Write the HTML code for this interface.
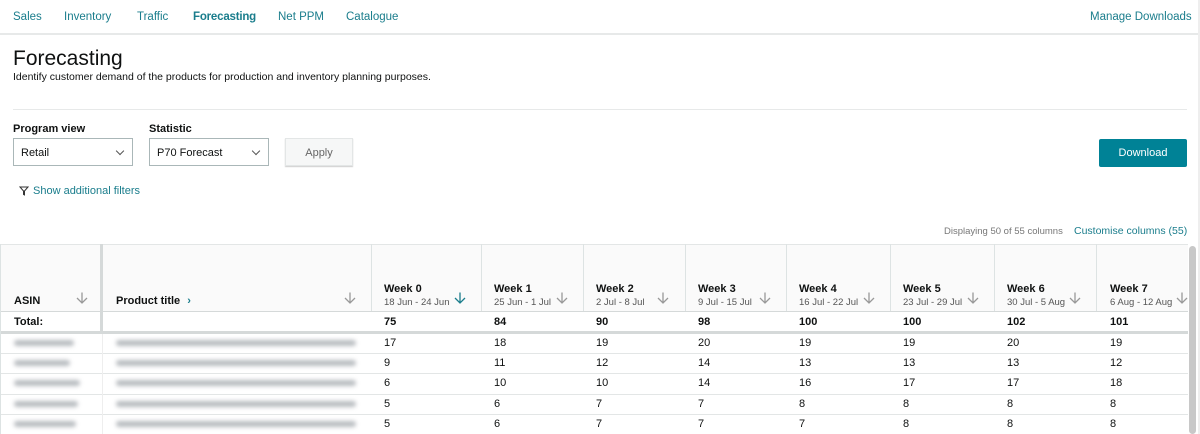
<!DOCTYPE html>
<html><head><meta charset="utf-8"><style>
*{box-sizing:border-box;margin:0;padding:0}
body{width:1200px;height:434px;overflow:hidden;background:#fff;font-family:"Liberation Sans",Arial,sans-serif;color:#0f1111;position:relative}
.a{position:absolute;white-space:nowrap}
.nav{font-size:11.5px;color:#1a7d8c;top:11px}
.lbl{font-size:11px;font-weight:bold}
.sel{position:absolute;height:28px;border:1px solid #aab7b8;background:#fff;font-size:11px;padding:8px 7px}
.chev{position:absolute;right:9px;top:9px;width:6px;height:6px;border-right:1px solid #555;border-bottom:1px solid #555;transform:rotate(45deg)}
.hd{font-size:11px;font-weight:bold}
.sub{font-size:9.5px;color:#555;font-weight:normal}
.vl{position:absolute;width:1px;background:#dde3e3}
.hl{position:absolute;height:1px;background:#e3e6e6;left:0;width:1188px}
.c{position:absolute;font-size:11px}
.blur{position:absolute;height:6px;background:#b8bcc0;filter:blur(2px);border-radius:3px}
</style></head><body>
<div class="a nav" style="left:13px">Sales</div>
<div class="a nav" style="left:64px">Inventory</div>
<div class="a nav" style="left:137px">Traffic</div>
<div class="a nav" style="left:193px;font-weight:bold;letter-spacing:-0.2px">Forecasting</div>
<div class="a nav" style="left:278px">Net PPM</div>
<div class="a nav" style="left:346px">Catalogue</div>
<div class="a nav" style="left:1090px">Manage Downloads</div>
<div class="a" style="left:0;top:33px;width:1200px;height:2px;background:#e7e9e9"></div>
<div class="a" style="left:1198px;top:0;width:2px;height:434px;background:#eee"></div>
<div class="a" style="left:13px;top:47px;font-size:21px">Forecasting</div>
<div class="a" style="left:13px;top:71px;font-size:10.5px">Identify customer demand of the products for production and inventory planning purposes.</div>
<div class="a" style="left:13px;top:109px;width:1174px;height:1px;background:#e7e9e9"></div>
<div class="a lbl" style="left:13px;top:123px">Program view</div>
<div class="a lbl" style="left:149px;top:123px">Statistic</div>
<div class="sel" style="left:13px;top:138px;width:120px">Retail<span class="chev"></span></div>
<div class="sel" style="left:149px;top:138px;width:120px">P70 Forecast<span class="chev"></span></div>
<div class="a" style="left:285px;top:138px;width:68px;height:28px;background:#f6f7f7;border:1px solid #e3e6e6;box-shadow:0 1px 1px #ccc;font-size:11px;color:#666;text-align:center;line-height:28px">Apply</div>
<div class="a" style="left:1099px;top:139px;width:88px;height:28px;background:#008296;color:#fff;font-size:11px;text-align:center;line-height:28px;border-radius:2px">Download</div>
<svg class="a" style="left:19px;top:186px" width="10" height="10"><path d="M1 1h8L5.5 5v4L4.5 8.5V5z" fill="none" stroke="#333" stroke-width="1"/></svg>
<div class="a" style="left:33px;top:185px;font-size:11px;color:#1a7d8c">Show additional filters</div>
<div class="a" style="left:944px;top:226px;font-size:9.5px;color:#777">Displaying 50 of 55 columns</div>
<div class="a" style="left:1074px;top:225px;font-size:10.5px;color:#1a7d8c">Customise columns (55)</div>
<div class="a" style="left:0;top:244px;width:1188px;height:67px;background:#fafafa;border-top:1px solid #e3e6e6"></div>
<div class="a" style="left:1189px;top:246px;width:7px;height:188px;background:#c8c8c8;border-radius:4px"></div>
<div class="hl" style="top:311px;background:#d5d9d9"></div>
<div class="hl" style="top:331px;height:3px;background:#d5d9d9"></div>
<div class="hl" style="top:353px"></div><div class="hl" style="top:373px"></div><div class="hl" style="top:394px"></div><div class="hl" style="top:414px"></div>
<div class="vl" style="left:0;top:244px;height:190px"></div>
<div class="vl" style="left:100px;top:244px;height:90px;width:3px;background:#d5d9d9"></div>
<div class="vl" style="left:102px;top:334px;height:100px;width:1px;background:#eee"></div>
<div class="vl" style="left:371px;top:244px;height:67px"></div>
<div class="vl" style="left:481px;top:244px;height:67px"></div>
<div class="vl" style="left:583px;top:244px;height:67px"></div>
<div class="vl" style="left:685px;top:244px;height:67px"></div>
<div class="vl" style="left:786px;top:244px;height:67px"></div>
<div class="vl" style="left:890px;top:244px;height:67px"></div>
<div class="vl" style="left:994px;top:244px;height:67px"></div>
<div class="vl" style="left:1096px;top:244px;height:67px"></div>
<div class="a hd" style="left:14px;top:295px">ASIN</div>
<div class="a hd" style="left:116px;top:295px">Product title <span style="color:#1a7d8c;margin-left:4px">›</span></div>
<div id="wk"></div>
<div class="a hd" style="left:14px;top:316px">Total:</div>
<script>
function arr(x,y,col){return '<svg class="a" style="left:'+(x-6)+'px;top:'+y+'px" width="12" height="12"><path d="M6 0.5V11M1 6l5 5 5-5" fill="none" stroke="'+col+'" stroke-width="1.3"/></svg>';}
var xs=[384,494,596,698,799,903,1007,1110];
var d=["18 Jun - 24 Jun","25 Jun - 1 Jul","2 Jul - 8 Jul","9 Jul - 15 Jul","16 Jul - 22 Jul","23 Jul - 29 Jul","30 Jul - 5 Aug","6 Aug - 12 Aug"];
var ar=[460,562,663,765,869,973,1075,1182];
var tot=[75,84,90,98,100,100,102,101];
var rows=[[17,18,19,20,19,19,20,19],[9,11,12,14,13,13,13,12],[6,10,10,14,16,17,17,18],[5,6,7,7,8,8,8,8],[5,6,7,7,7,8,8,8]];
var ry=[337,357,377,398,418];
var h=arr(82,292,'#999')+arr(350,292,'#999');
for(var i=0;i<8;i++){
h+='<div class="a hd" style="left:'+xs[i]+'px;top:283px">Week '+i+'</div>';
h+='<div class="a sub" style="left:'+xs[i]+'px;top:297px">'+d[i]+'</div>';
h+=arr(ar[i],292,i==0?'#1a7d8c':'#999');
h+='<div class="a hd" style="left:'+xs[i]+'px;top:316px">'+tot[i]+'</div>';
for(var r=0;r<5;r++)h+='<div class="c" style="left:'+xs[i]+'px;top:'+ry[r]+'px">'+rows[r][i]+'</div>';
}
var bw=[60,56,66,64,62];
for(var r=0;r<5;r++){
h+='<div class="blur" style="left:14px;top:'+(ry[r]+3)+'px;width:'+bw[r]+'px"></div>';
h+='<div class="blur" style="left:116px;top:'+(ry[r]+3)+'px;width:240px"></div>';
}
document.getElementById("wk").outerHTML=h;
</script>
</body></html>
